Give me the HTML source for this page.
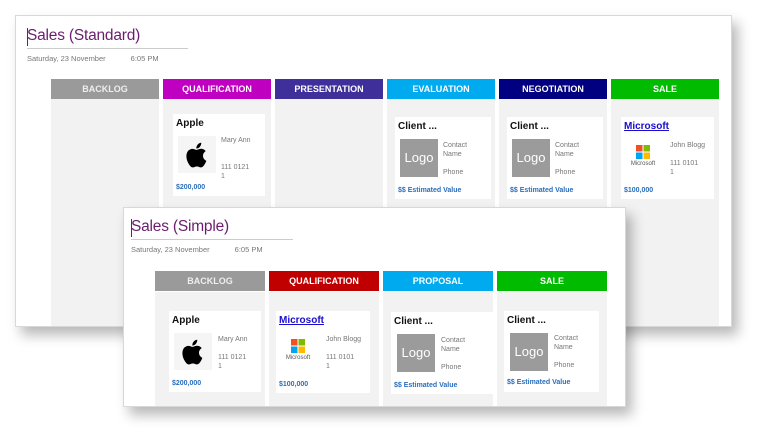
<!DOCTYPE html>
<html><head><style>
*{margin:0;padding:0;box-sizing:border-box}
body{width:768px;height:442px;background:#fff;position:relative;overflow:hidden;font-family:"Liberation Sans",sans-serif}
.win{position:absolute;background:#fff;border:1px solid #d8d8d8;box-shadow:6px 8px 12px rgba(0,0,0,.28);overflow:hidden}
.a{position:absolute}
.title{color:#6a1d6e;font-size:15.5px;white-space:nowrap;letter-spacing:-0.2px}
.title:before{content:"";position:absolute;left:0;top:1px;width:1px;height:18px;background:#6a1d6e}
.date{font-size:7.5px;color:#777;white-space:nowrap}
.hd{position:absolute;height:20px;color:#fff;font-weight:bold;font-size:9px;text-align:center;line-height:20px}
.col{position:absolute;background:#f2f2f2}
.card{position:absolute;background:#fff}
.card .n{position:absolute;left:3px;top:4px;font-weight:bold;font-size:10px;color:#111}
.card .ms{color:#1a0dcc;text-decoration:underline}
.card .t{position:absolute;font-size:7px;color:#777;line-height:9px}
.card .v{position:absolute;left:3px;font-size:7px;font-weight:bold;color:#2a6ebb}
.logo{position:absolute;width:38px;height:38px;background:#9b9b9b;color:#fff;font-size:13px;line-height:38px;text-align:center}
.apl{position:absolute;width:38px;height:37px;background:#f5f5f5}
.apl svg{position:absolute;left:3px;top:3px;width:32px;height:32px}
.msl{position:absolute;width:38px;text-align:center;font-size:6px;color:#555}
.msq{display:block;margin:0 auto 2px;width:14px;height:14px;background:linear-gradient(90deg,transparent 6.5px,#fff 6.5px,#fff 7.5px,transparent 7.5px),linear-gradient(0deg,transparent 6.5px,#fff 6.5px,#fff 7.5px,transparent 7.5px),conic-gradient(#7fba00 0 25%,#ffb900 0 50%,#00a4ef 0 75%,#f25022 0)}
</style></head><body>

<svg style="position:absolute;width:0;height:0"><defs><symbol id="ap" viewBox="0 0 24 24"><path fill="#000" d="M16.5 12.6c0-2.3 1.9-3.4 2-3.5-1.1-1.6-2.8-1.800-3.4-1.8-1.4-.1-2.8.9-3.5.9-.7 0-1.8-.8-3-.8-1.5 0-3 .9-3.8 2.3-1.6 2.8-.4 7 1.2 9.3.8 1.1 1.7 2.4 2.900 2.3 1.200 0 1.6-.7 3-.7s1.8.7 3 .7c1.3 0 2.1-1.1 2.8-2.3.9-1.3 1.3-2.6 1.3-2.6s-2.5-1-2.5-3.8zM14.2 5.8c.6-.8 1.1-1.9 1-3-.9 0-2.1.6-2.7 1.4-.6.7-1.1 1.8-1 2.9 1 .1 2.1-.5 2.7-1.300z"/></symbol></defs></svg>

<div class="win" style="left:15px;top:15px;width:717px;height:312px">
 <div class="a title" style="left:11px;top:11px">Sales (Standard)</div>
 <div class="a" style="left:11px;top:32px;width:161px;height:1px;background:#ccc"></div>
 <div class="a date" style="left:11px;top:38px">Saturday, 23 November &nbsp;&nbsp;&nbsp;&nbsp;&nbsp;&nbsp;&nbsp;&nbsp;&nbsp;&nbsp;&nbsp;6:05 PM</div>
 <div class="col" style="left:35px;top:83px;width:108px;height:240px"></div>
 <div class="col" style="left:147px;top:83px;width:108px;height:240px"></div>
 <div class="col" style="left:259px;top:83px;width:108px;height:240px"></div>
 <div class="col" style="left:371px;top:83px;width:108px;height:240px"></div>
 <div class="col" style="left:483px;top:83px;width:108px;height:240px"></div>
 <div class="col" style="left:595px;top:83px;width:108px;height:240px"></div>
 <div class="hd" style="left:35px;top:63px;width:108px;background:#9a9a9a;color:#eee">BACKLOG</div>
 <div class="hd" style="left:147px;top:63px;width:108px;background:#c000c0">QUALIFICATION</div>
 <div class="hd" style="left:259px;top:63px;width:108px;background:#3f2f9a">PRESENTATION</div>
 <div class="hd" style="left:371px;top:63px;width:108px;background:#00aaee">EVALUATION</div>
 <div class="hd" style="left:483px;top:63px;width:108px;background:#000080">NEGOTIATION</div>
 <div class="hd" style="left:595px;top:63px;width:108px;background:#00bb00">SALE</div>

 <div class="card" style="left:157px;top:98px;width:92px;height:82px">
  <div class="n">Apple</div><div class="apl" style="left:5px;top:22px"><svg><use href="#ap"/></svg></div>
  <div class="t" style="left:48px;top:22px">Mary Ann<br><br><br>111 0121<br>1</div>
  <div class="v" style="top:70px">$200,000</div></div>
 <div class="card" style="left:379px;top:101px;width:96px;height:82px">
  <div class="n">Client ...</div><div class="logo" style="left:5px;top:22px">Logo</div>
  <div class="t" style="left:48px;top:24px">Contact<br>Name<br><br>Phone</div>
  <div class="v" style="top:70px">$$ Estimated Value</div></div>
 <div class="card" style="left:491px;top:101px;width:96px;height:82px">
  <div class="n">Client ...</div><div class="logo" style="left:5px;top:22px">Logo</div>
  <div class="t" style="left:48px;top:24px">Contact<br>Name<br><br>Phone</div>
  <div class="v" style="top:70px">$$ Estimated Value</div></div>
 <div class="card" style="left:605px;top:101px;width:93px;height:82px">
  <div class="n ms">Microsoft</div><div class="msl" style="left:3px;top:28px"><i class="msq"></i>Microsoft</div>
  <div class="t" style="left:49px;top:24px">John Blogg<br><br>111 0101<br>1</div>
  <div class="v" style="top:70px">$100,000</div></div>
</div>

<div class="win" style="left:123px;top:207px;width:503px;height:200px">
 <div class="a title" style="left:7px;top:10px">Sales (Simple)</div>
 <div class="a" style="left:7px;top:31px;width:162px;height:1px;background:#ccc"></div>
 <div class="a date" style="left:7px;top:37px">Saturday, 23 November &nbsp;&nbsp;&nbsp;&nbsp;&nbsp;&nbsp;&nbsp;&nbsp;&nbsp;&nbsp;&nbsp;6:05 PM</div>
 <div class="col" style="left:31px;top:84px;width:110px;height:120px"></div>
 <div class="col" style="left:145px;top:84px;width:110px;height:120px"></div>
 <div class="col" style="left:259px;top:84px;width:110px;height:120px"></div>
 <div class="col" style="left:373px;top:84px;width:110px;height:120px"></div>
 <div class="hd" style="left:31px;top:63px;width:110px;background:#9a9a9a;color:#eee">BACKLOG</div>
 <div class="hd" style="left:145px;top:63px;width:110px;background:#c00000">QUALIFICATION</div>
 <div class="hd" style="left:259px;top:63px;width:110px;background:#00aaee">PROPOSAL</div>
 <div class="hd" style="left:373px;top:63px;width:110px;background:#00bb00">SALE</div>

 <div class="card" style="left:45px;top:103px;width:92px;height:81px">
  <div class="n">Apple</div><div class="apl" style="left:5px;top:22px"><svg><use href="#ap"/></svg></div>
  <div class="t" style="left:49px;top:24px">Mary Ann<br><br>111 0121<br>1</div>
  <div class="v" style="top:69px">$200,000</div></div>
 <div class="card" style="left:152px;top:103px;width:94px;height:82px">
  <div class="n ms">Microsoft</div><div class="msl" style="left:3px;top:28px"><i class="msq"></i>Microsoft</div>
  <div class="t" style="left:50px;top:24px">John Blogg<br><br>111 0101<br>1</div>
  <div class="v" style="top:70px">$100,000</div></div>
 <div class="card" style="left:267px;top:104px;width:102px;height:82px">
  <div class="n">Client ...</div><div class="logo" style="left:6px;top:22px">Logo</div>
  <div class="t" style="left:50px;top:24px">Contact<br>Name<br><br>Phone</div>
  <div class="v" style="top:70px">$$ Estimated Value</div></div>
 <div class="card" style="left:380px;top:103px;width:95px;height:81px">
  <div class="n">Client ...</div><div class="logo" style="left:6px;top:22px">Logo</div>
  <div class="t" style="left:50px;top:23px">Contact<br>Name<br><br>Phone</div>
  <div class="v" style="top:68px">$$ Estimated Value</div></div>
</div>
</body></html>
